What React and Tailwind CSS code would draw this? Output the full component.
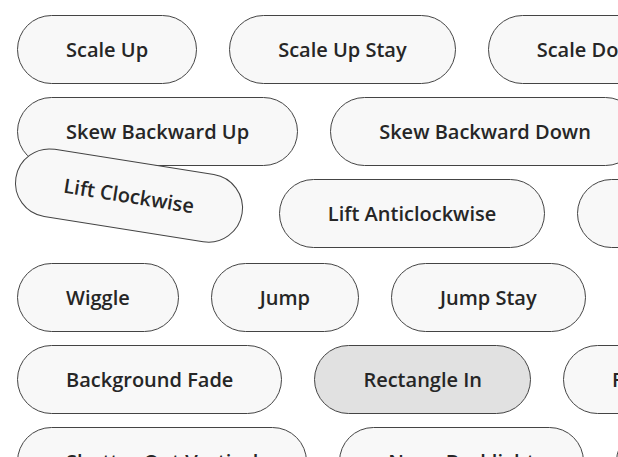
const rows = [
  ['Scale Up', 'Scale Up Stay', 'Scale Down', 'Scale Down Stay'],
  ['Skew Backward Up', 'Skew Backward Down', 'Skew Forward Up'],
  ['Lift Clockwise', 'Lift Anticlockwise', 'Lift Up'],
  ['Wiggle', 'Jump', 'Jump Stay', 'Shake'],
  ['Background Fade', 'Rectangle In', 'Rectangle Out'],
  ['Shutter Out Vertical', 'Neon Backlight', 'Glow'],
];

const base =
  'shrink-0 h-[69px] px-[48px] rounded-full border border-[#444] text-[20px] font-semibold leading-none text-[#262626] whitespace-nowrap flex items-center';

const Pill = ({ label }) => {
  let extra = 'bg-[#f8f8f8]';
  if (label === 'Rectangle In') extra = 'bg-[#e1e1e1]';
  if (label === 'Lift Clockwise')
    extra = 'bg-[#f8f8f8] -translate-x-[3px] -translate-y-[18px] rotate-[9deg] relative z-10';
  return <button className={`${base} ${extra}`}>{label}</button>;
};

export default function App() {
  return (
    <div
      className="w-[618px] h-[457px] overflow-hidden bg-white pt-[15px] pl-[17px]"
      style={{ fontFamily: '"Open Sans", "Noto Sans", sans-serif' }}
    >
      <div className="flex flex-col gap-[13px]">
        {rows.map((row, i) => (
          <div key={i} className={`flex gap-[32px] ${i === 3 ? 'mt-[2px]' : ''}`}>
            {row.map((label) => (
              <Pill key={label} label={label} />
            ))}
          </div>
        ))}
      </div>
    </div>
  );
}
